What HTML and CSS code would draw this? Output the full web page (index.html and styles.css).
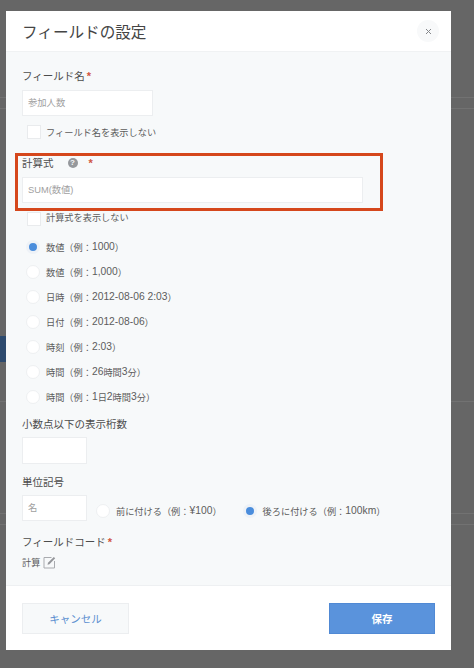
FILE: index.html
```html
<!DOCTYPE html>
<html lang="ja">
<head>
  <meta charset="UTF-8">
  <meta name="viewport" content="width=device-width, initial-scale=1.0">
  <title>フィールドの設定</title>
  <link rel="stylesheet" href="styles.css">
</head>
<body>
  <!-- page behind the overlay -->
  <div class="bg-line bg-line-1"></div>
  <div class="bg-line bg-line-2"></div>
  <div class="bg-line bg-line-3"></div>
  <div class="bg-line bg-line-4"></div>
  <div class="bg-line bg-line-5"></div>
  <div class="bg-blue"></div>

  <div class="dialog">
    <div class="dialog-header">
      <h1 class="dialog-title">フィールドの設定</h1>
      <button class="close">
        <svg width="7" height="7" viewBox="0 0 7 7"><path d="M1 1l5 5M6 1l-5 5" stroke="#85878b" stroke-width="1" fill="none"/></svg>
      </button>
    </div>

    <div class="dialog-body">
      <div class="label">フィールド名<span class="req">*</span></div>
      <input class="input input-name" placeholder="参加人数">
      <label class="check"><span class="box"></span>フィールド名を表示しない</label>

      <div class="label label-formula">計算式<span class="help">?</span><span class="req req-formula">*</span></div>
      <input class="input input-formula" placeholder="SUM(数値)">
      <label class="check check-formula"><span class="box"></span>計算式を表示しない</label>

      <div class="radios">
        <label class="radio"><span class="dot on"></span>数値（例：<span class="num">1000</span>）</label>
        <label class="radio"><span class="dot"></span>数値（例：<span class="num">1,000</span>）</label>
        <label class="radio"><span class="dot"></span>日時（例：<span class="num">2012-08-06 2:03</span>）</label>
        <label class="radio"><span class="dot"></span>日付（例：<span class="num">2012-08-06</span>）</label>
        <label class="radio"><span class="dot"></span>時刻（例：<span class="num">2:03</span>）</label>
        <label class="radio"><span class="dot"></span>時間（例：<span class="num">26</span>時間<span class="num">3</span>分）</label>
        <label class="radio"><span class="dot"></span>時間（例：<span class="num">1</span>日<span class="num">2</span>時間<span class="num">3</span>分）</label>
      </div>

      <div class="label label-digits">小数点以下の表示桁数</div>
      <input class="input input-small">

      <div class="label label-unit">単位記号</div>
      <div class="unit-row">
        <input class="input input-small input-unit" placeholder="名">
        <label class="radio radio-inline"><span class="dot"></span>前に付ける（例：<span class="num">¥100</span>）</label>
        <label class="radio radio-inline"><span class="dot on"></span>後ろに付ける（例：<span class="num">100km</span>）</label>
      </div>

      <div class="label label-code">フィールドコード<span class="req">*</span></div>
      <div class="code-row">計算
        <svg class="edit" width="13" height="13" viewBox="0 0 13 13" fill="none">
          <path d="M8.5 1.5H1v10.5h10.5V5" stroke="#a9abaf" stroke-width="1"/>
          <path d="M4.5 8.8l.5-2L10.8.9l1.4 1.4L6.4 8.2z" fill="#94969a"/>
        </svg>
      </div>
    </div>

    <div class="dialog-footer">
      <button class="btn btn-cancel">キャンセル</button>
      <button class="btn btn-save">保存</button>
    </div>
  </div>

  <!-- annotation drawn on top of the screenshot -->
  <div class="highlight"></div>
</body>
</html>
```

FILE: styles.css
```css
* {
  box-sizing: border-box;
}
html, body {
  height: 100%;
}
body {
  margin: 0;
  background-color: #666666;
  font-family: "Liberation Sans", "Noto Sans CJK JP", sans-serif;
  color: #4a4a4a;
  overflow: hidden;
  position: relative;
}
.bg-line {
  position: absolute;
  left: 0;
  right: 0;
  height: 1px;
  background-color: #727272;
}
.bg-line-1 { top: 97px; }
.bg-line-2 { top: 108px; }
.bg-line-3 { top: 401px; }
.bg-line-4 { top: 513px; }
.bg-line-5 { top: 524px; }
.bg-blue {
  position: absolute;
  left: 0;
  top: 336px;
  width: 6px;
  height: 26px;
  background-color: #2d4a6e;
}
.dialog {
  position: relative;
  margin: 11px 0 0 6px;
  width: 445px;
  height: 639px;
  background-color: #f7f9fa;
  display: flex;
  flex-direction: column;
  float: left;
}
.dialog-header {
  height: 41px;
  flex: none;
  background-color: #fff;
  border-bottom: 1px solid #f0f2f3;
  display: flex;
  justify-content: space-between;
  align-items: center;
  padding: 0 12px 0 16px;
}
.dialog-title {
  margin: 0;
  font-size: 15.6px;
  font-weight: 400;
  color: #454545;
}
.close {
  width: 22px;
  height: 22px;
  border: none;
  border-radius: 50%;
  background-color: #f8f9fa;
  padding: 0;
  display: flex;
  align-items: center;
  justify-content: center;
}
.dialog-body {
  flex: 1;
  padding: 16px 16px 0;
}
.label {
  font-size: 10.5px;
  line-height: 16px;
  height: 16px;
  color: #4c4c4c;
  display: flex;
  align-items: center;
}
.req {
  color: #d0553f;
  margin-left: 2px;
  font-size: 11px;
  font-weight: 700;
}
.input {
  display: block;
  height: 26px;
  border: 1px solid #eceef0;
  background-color: #fff;
  padding: 0 5px;
  font-family: inherit;
  font-size: 9.3px;
  color: #4a4a4a;
  border-radius: 0;
  outline: none;
}
.input::placeholder {
  color: #a0a0a0;
}
.input-name {
  width: 131px;
  margin-top: 6px;
}
.check {
  display: flex;
  align-items: center;
  font-size: 9.2px;
  height: 14px;
  margin: 9px 0 0 5px;
  color: #5c5c5c;
}
.box {
  width: 14px;
  height: 14px;
  background-color: #fff;
  border: 1px solid #e9ebed;
  margin-right: 5px;
  flex: none;
}
.label-formula {
  margin-top: 16px;
}
.help {
  width: 10px;
  height: 10px;
  border-radius: 50%;
  background-color: #95989c;
  color: #f7f9fa;
  font-size: 8px;
  font-weight: 700;
  line-height: 10px;
  text-align: center;
  margin-left: 14px;
}
.req-formula {
  margin-left: 11px;
}
.input-formula {
  width: 341px;
  margin-top: 6px;
}
.check-formula {
  margin-top: 9px;
  align-items: flex-start;
  line-height: 13px;
}
.radios {
  margin-top: 8px;
}
.radio {
  display: flex;
  align-items: center;
  height: 25px;
  font-size: 9.2px;
  color: #5c5c5c;
  margin-left: 4px;
  white-space: pre;
}
.num {
  font-size: 10.3px;
}
.dot {
  width: 14px;
  height: 14px;
  border-radius: 50%;
  background-color: #fff;
  border: 1px solid #eef0f2;
  margin-right: 6px;
  flex: none;
}
.dot.on {
  background-color: #4a8ddc;
  border: 3px solid #eef2f7;
}
.label-digits {
  margin-top: 7px;
}
.input-small {
  width: 65px;
  height: 27px;
  margin-top: 5px;
}
.label-unit {
  margin-top: 10px;
}
.unit-row {
  display: flex;
  align-items: flex-start;
  margin-top: 5px;
}
.input-unit {
  margin-top: 0;
  height: 26px;
}
.radio-inline {
  margin: 3px 0 0 9px;
}
.radio-inline + .radio-inline {
  margin-left: 21px;
}
.label-code {
  margin-top: 11px;
}
.code-row {
  display: flex;
  align-items: center;
  gap: 3px;
  font-size: 9.2px;
  height: 14px;
  margin-top: 5px;
  color: #5c5c5c;
}
.edit {
  flex: none;
}
.dialog-footer {
  height: 65px;
  flex: none;
  background-color: #fff;
  border-top: 1px solid #eef0f2;
  display: flex;
  justify-content: space-between;
  align-items: flex-start;
  padding: 17px 16px 0;
}
.btn {
  height: 31px;
  width: 107px;
  font-family: inherit;
  font-size: 10.5px;
  border-radius: 0;
}
.btn-cancel {
  background-color: #f7f9fa;
  border: 1px solid #eceef0;
  color: #5b8fd0;
}
.btn-save {
  width: 106px;
  background-color: #5a93dc;
  border: 1px solid #5089d4;
  color: #fff;
  font-weight: 700;
}
.highlight {
  position: absolute;
  left: 15px;
  top: 153px;
  width: 368px;
  height: 58px;
  border: 3px solid #d5471c;
}
```
